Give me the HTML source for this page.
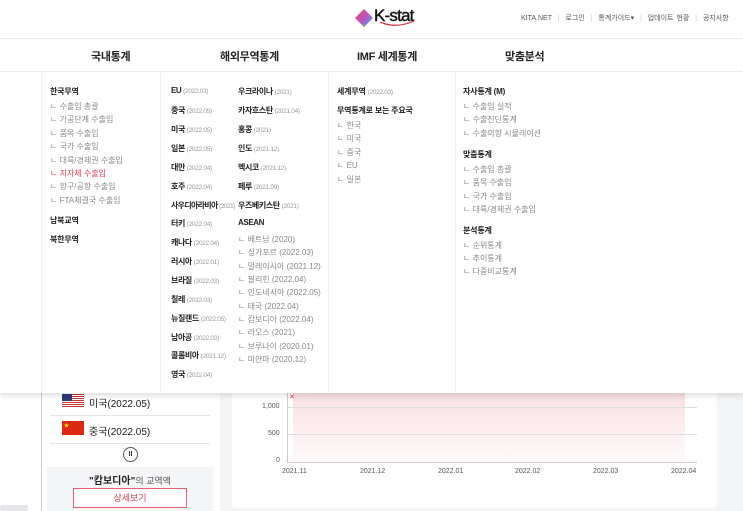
<!DOCTYPE html>
<html><head><meta charset="utf-8"><style>
*{margin:0;padding:0;box-sizing:border-box}
body{width:743px;height:511px;overflow:hidden;background:#fff;font-family:"Liberation Sans","Noto Sans CJK KR",sans-serif;position:relative}
.a{position:absolute;white-space:nowrap}
.h{font-size:8px;font-weight:bold;color:#222;letter-spacing:-.2px}
.s{font-size:8px;color:#888}
.d{font-size:6.5px;color:#999;font-weight:normal;letter-spacing:-.3px}
.c{font-size:8px;font-weight:bold;color:#222;letter-spacing:-.4px}
.nav{font-size:11px;font-weight:bold;color:#222;letter-spacing:-.3px}
.tl{font-size:7px;color:#555}
</style></head><body>
<div class="a" style="left:41px;top:380px;width:1px;height:131px;background:#ccc"></div>
<div class="a" style="left:220px;top:380px;width:523px;height:131px;background:#f4f5f7"></div>
<div class="a" style="left:232px;top:380px;width:485px;height:128px;background:#fff;border-radius:4px"></div>
<div class="a" style="left:0;top:505px;width:28px;height:6px;background:#e4e6ea;border-radius:2px"></div>
<div class="a" style="left:293px;top:392px;width:392px;height:80px;background:linear-gradient(#f9dfe2,#fff)"></div>
<div class="a" style="left:287px;top:407px;width:410px;height:1px;background:#ddd"></div>
<div class="a" style="left:287px;top:434px;width:410px;height:1px;background:#ddd"></div>
<div class="a" style="left:287px;top:392px;width:1px;height:70px;background:#ccc"></div>
<div class="a" style="left:287px;top:462px;width:410px;height:1px;background:#ccc"></div>
<div class="a" style="left:289px;top:393px;font-size:7px;color:#d33">✕</div>
<div class="a tl" style="left:262px;top:403px">1,000</div>
<div class="a tl" style="left:268px;top:430px">500</div>
<div class="a tl" style="left:276px;top:457px">0</div>
<div class="a tl" style="left:282px;top:468px">2021.11</div>
<div class="a tl" style="left:360px;top:468px">2021.12</div>
<div class="a tl" style="left:438px;top:468px">2022.01</div>
<div class="a tl" style="left:515px;top:468px">2022.02</div>
<div class="a tl" style="left:593px;top:468px">2022.03</div>
<div class="a tl" style="left:671px;top:468px">2022.04</div>
<div class="a" style="left:62px;top:394px;width:22px;height:14px;background:repeating-linear-gradient(#c33 0 1px,#fff 1px 2px)"></div>
<div class="a" style="left:62px;top:394px;width:10px;height:7px;background:#2b3a78"></div>
<div class="a" style="left:89px;top:395px;font-size:10px;color:#222">미국(2022.05)</div>
<div class="a" style="left:50px;top:415px;width:160px;height:1px;background:#e5e5e5"></div>
<div class="a" style="left:62px;top:421px;width:22px;height:14px;background:#de2910"></div>
<div class="a" style="left:64px;top:422px;font-size:5px;color:#ff0">★</div>
<div class="a" style="left:89px;top:423px;font-size:10px;color:#222">중국(2022.05)</div>
<div class="a" style="left:50px;top:443px;width:160px;height:1px;background:#e5e5e5"></div>
<div class="a" style="left:123px;top:447px;width:15px;height:15px;border:1px solid #555;border-radius:50%;font-size:7px;text-align:center;line-height:13px;color:#333;font-weight:bold">II</div>
<div class="a" style="left:47px;top:467px;width:166px;height:44px;background:#f4f5f7"></div>
<div class="a" style="left:47px;top:472px;width:166px;text-align:center;font-size:9px;color:#555"><b style="color:#222;font-size:10px">"캄보디아"</b>의 교역액</div>
<div class="a" style="left:73px;top:488px;width:114px;height:20px;border:1px solid #e06070;background:#fff;text-align:center;font-size:9px;line-height:18px;color:#d04050">상세보기</div>
<div class="a" style="left:0;top:0;width:743px;height:393px;background:#fff;box-shadow:0 3px 5px rgba(0,0,0,.12)"></div>
<svg class="a" style="left:355px;top:9px" width="18" height="18" viewBox="0 0 18 18"><defs><linearGradient id="g" x1="0" y1="0" x2="1" y2="1"><stop offset="0" stop-color="#f05050"/><stop offset=".5" stop-color="#c050c0"/><stop offset="1" stop-color="#30c0e0"/></linearGradient></defs><polygon points="9,0 18,9 9,18 0,9" fill="url(#g)"/></svg>
<div class="a" style="left:374px;top:6px;font-size:17px;color:#111;letter-spacing:-.8px;-webkit-text-stroke:.4px #111">K-stat</div>
<svg class="a" style="left:378px;top:20px" width="40" height="8"><path d="M2 2 Q18 9 36 1" stroke="#d03040" stroke-width="1.2" fill="none"/></svg>
<div class="a" style="left:521px;top:13px;font-size:7px;color:#555;word-spacing:1px">KITA.NET &nbsp;<span style="color:#ccc">|</span>&nbsp; 로그인 &nbsp;<span style="color:#ccc">|</span>&nbsp; 통계가이드▾ &nbsp;<span style="color:#ccc">|</span>&nbsp; 업데이트 현황 &nbsp;<span style="color:#ccc">|</span>&nbsp; 공지사항</div>
<div class="a" style="left:0;top:38px;width:743px;height:1px;background:#eee"></div>
<div class="a nav" style="left:91px;top:48px">국내통계</div>
<div class="a nav" style="left:220px;top:48px">해외무역통계</div>
<div class="a nav" style="left:357px;top:48px">IMF 세계통계</div>
<div class="a nav" style="left:505px;top:48px">맞춤분석</div>
<div class="a" style="left:0;top:71px;width:743px;height:1px;background:#eee"></div>
<div class="a" style="left:41px;top:72px;width:1px;height:321px;background:#eee"></div>
<div class="a" style="left:160px;top:72px;width:1px;height:321px;background:#eee"></div>
<div class="a" style="left:328px;top:72px;width:1px;height:321px;background:#eee"></div>
<div class="a" style="left:455px;top:72px;width:1px;height:321px;background:#eee"></div>
<div class="a h" style="left:50px;top:86px">한국무역</div>
<div class="a s" style="left:50px;top:101px">ㄴ 수출입 총괄</div>
<div class="a s" style="left:50px;top:114px">ㄴ 가공단계 수출입</div>
<div class="a s" style="left:50px;top:128px">ㄴ 품목 수출입</div>
<div class="a s" style="left:50px;top:141px">ㄴ 국가 수출입</div>
<div class="a s" style="left:50px;top:155px">ㄴ 대륙/경제권 수출입</div>
<div class="a s" style="left:50px;top:168px;color:#e04050">ㄴ 지자체 수출입</div>
<div class="a s" style="left:50px;top:181px">ㄴ 항구/공항 수출입</div>
<div class="a s" style="left:50px;top:195px">ㄴ FTA체결국 수출입</div>
<div class="a h" style="left:50px;top:215px">남북교역</div>
<div class="a h" style="left:50px;top:234px">북한무역</div>
<div class="a c" style="left:171px;top:86px">EU <span class="d">(2022.03)</span></div>
<div class="a c" style="left:171px;top:105px">중국 <span class="d">(2022.05)</span></div>
<div class="a c" style="left:171px;top:124px">미국 <span class="d">(2022.05)</span></div>
<div class="a c" style="left:171px;top:143px">일본 <span class="d">(2022.05)</span></div>
<div class="a c" style="left:171px;top:162px">대만 <span class="d">(2022.04)</span></div>
<div class="a c" style="left:171px;top:181px">호주 <span class="d">(2022.04)</span></div>
<div class="a c" style="left:171px;top:200px;letter-spacing:-.7px">사우디아라비아 <span class="d" style="letter-spacing:-.5px">(2021)</span></div>
<div class="a c" style="left:171px;top:218px">터키 <span class="d">(2022.04)</span></div>
<div class="a c" style="left:171px;top:237px">캐나다 <span class="d">(2022.04)</span></div>
<div class="a c" style="left:171px;top:256px">러시아 <span class="d">(2022.01)</span></div>
<div class="a c" style="left:171px;top:275px">브라질 <span class="d">(2022.03)</span></div>
<div class="a c" style="left:171px;top:294px">칠레 <span class="d">(2022.03)</span></div>
<div class="a c" style="left:171px;top:313px">뉴질랜드 <span class="d">(2022.05)</span></div>
<div class="a c" style="left:171px;top:332px">남아공 <span class="d">(2022.03)</span></div>
<div class="a c" style="left:171px;top:350px">콜롬비아 <span class="d">(2021.12)</span></div>
<div class="a c" style="left:171px;top:369px">영국 <span class="d">(2022.04)</span></div>
<div class="a c" style="left:238px;top:86px">우크라이나 <span class="d">(2021)</span></div>
<div class="a c" style="left:238px;top:105px">카자흐스탄 <span class="d">(2021.04)</span></div>
<div class="a c" style="left:238px;top:124px">홍콩 <span class="d">(2021)</span></div>
<div class="a c" style="left:238px;top:143px">인도 <span class="d">(2021.12)</span></div>
<div class="a c" style="left:238px;top:162px">멕시코 <span class="d">(2021.12)</span></div>
<div class="a c" style="left:238px;top:181px">페루 <span class="d">(2021.09)</span></div>
<div class="a c" style="left:238px;top:200px">우즈베키스탄 <span class="d">(2021)</span></div>
<div class="a c" style="left:238px;top:218px">ASEAN</div>
<div class="a s" style="left:238px;top:234px">ㄴ 베트남 (2020)</div>
<div class="a s" style="left:238px;top:247px">ㄴ 싱가포르 (2022.03)</div>
<div class="a s" style="left:238px;top:261px">ㄴ 말레이시아 (2021.12)</div>
<div class="a s" style="left:238px;top:274px">ㄴ 필리핀 (2022.04)</div>
<div class="a s" style="left:238px;top:287px">ㄴ 인도네시아 (2022.05)</div>
<div class="a s" style="left:238px;top:301px">ㄴ 태국 (2022.04)</div>
<div class="a s" style="left:238px;top:314px">ㄴ 캄보디아 (2022.04)</div>
<div class="a s" style="left:238px;top:327px">ㄴ 라오스 (2021)</div>
<div class="a s" style="left:238px;top:341px">ㄴ 브루나이 (2020.01)</div>
<div class="a s" style="left:238px;top:354px">ㄴ 미얀마 (2020.12)</div>
<div class="a h" style="left:337px;top:86px">세계무역 <span class="d">(2022.03)</span></div>
<div class="a h" style="left:337px;top:105px">무역통계로 보는 주요국</div>
<div class="a s" style="left:337px;top:120px">ㄴ 한국</div>
<div class="a s" style="left:337px;top:133px">ㄴ 미국</div>
<div class="a s" style="left:337px;top:147px">ㄴ 중국</div>
<div class="a s" style="left:337px;top:160px">ㄴ EU</div>
<div class="a s" style="left:337px;top:174px">ㄴ 일본</div>
<div class="a h" style="left:463px;top:86px">자사통계 (M)</div>
<div class="a s" style="left:463px;top:101px">ㄴ 수출입 실적</div>
<div class="a s" style="left:463px;top:114px">ㄴ 수출진단통계</div>
<div class="a s" style="left:463px;top:128px">ㄴ 수출의향 시뮬레이션</div>
<div class="a h" style="left:463px;top:149px">맞춤통계</div>
<div class="a s" style="left:463px;top:164px">ㄴ 수출입 총괄</div>
<div class="a s" style="left:463px;top:177px">ㄴ 품목 수출입</div>
<div class="a s" style="left:463px;top:191px">ㄴ 국가 수출입</div>
<div class="a s" style="left:463px;top:204px">ㄴ 대륙/경제권 수출입</div>
<div class="a h" style="left:463px;top:225px">분석통계</div>
<div class="a s" style="left:463px;top:240px">ㄴ 순위통계</div>
<div class="a s" style="left:463px;top:253px">ㄴ 추이통계</div>
<div class="a s" style="left:463px;top:266px">ㄴ 다중비교통계</div>
</body></html>
